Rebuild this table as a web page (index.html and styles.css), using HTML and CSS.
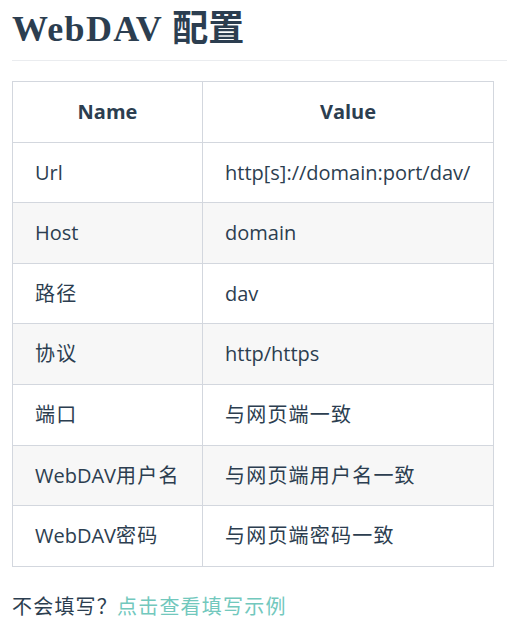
FILE: index.html
```html
<!DOCTYPE html>
<html lang="zh-CN">
<head>
<meta charset="utf-8">
<title>WebDAV 配置</title>
<link rel="stylesheet" href="styles.css">
</head>
<body>
<div class="content">
  <h2 class="title"><span class="title-latin">WebDAV</span> 配置</h2>
  <table class="config">
    <thead>
      <tr><th>Name</th><th>Value</th></tr>
    </thead>
    <tbody>
      <tr><td>Url</td><td>http[s]://domain:port/dav/</td></tr>
      <tr><td>Host</td><td>domain</td></tr>
      <tr><td><span class="cjk">路径</span></td><td>dav</td></tr>
      <tr><td><span class="cjk">协议</span></td><td>http/https</td></tr>
      <tr><td><span class="cjk">端口</span></td><td><span class="cjk">与网页端一致</span></td></tr>
      <tr><td>WebDAV<span class="cjk">用户名</span></td><td><span class="cjk">与网页端用户名一致</span></td></tr>
      <tr><td>WebDAV<span class="cjk">密码</span></td><td><span class="cjk">与网页端密码一致</span></td></tr>
    </tbody>
  </table>
  <p class="help"><span class="cjk">不会填写？</span><a class="help-link cjk" href="#">点击查看填写示例</a></p>
</div>
</body>
</html>
```
FILE: styles.css
```css
html, body {
  margin: 0;
  padding: 0;
  background: #ffffff;
}
body {
  font-family: "Open Sans", "Noto Sans CJK SC", sans-serif;
  color: #2c3e50;
  font-size: 20px;
  overflow: hidden;
}
.content {
  padding: 0 0 0 12px;
}
.title {
  margin: 0;
  padding: 9px 0 11px;
  font-family: "Liberation Serif", "Noto Sans CJK SC", serif;
  font-size: 36px;
  font-weight: 700;
  line-height: 40px;
  border-bottom: 1px solid #eaecef;
  color: #2c3e50;
}
.title-latin {
  font-family: "Liberation Serif", serif;
  letter-spacing: 1.3px;
}
.cjk {
  letter-spacing: 1.2px;
}
.config {
  margin-top: 20px;
  border-collapse: collapse;
  width: 482px;
}
.config th,
.config td {
  border: 1px solid #d3d7de;
  padding: 14px 22px;
  line-height: 31.6px;
  text-align: left;
  font-weight: 400;
}
.config th {
  text-align: center;
  font-weight: 700;
}
.config th:first-child,
.config td:first-child {
  width: 145px;
}
.config tbody tr:nth-child(even) {
  background: #f7f7f7;
}
.help {
  margin: 25px 0 0;
  line-height: 30px;
}
.help-link {
  margin-left: -1px;
  color: #72c8bd;
  text-decoration: none;
}
```
